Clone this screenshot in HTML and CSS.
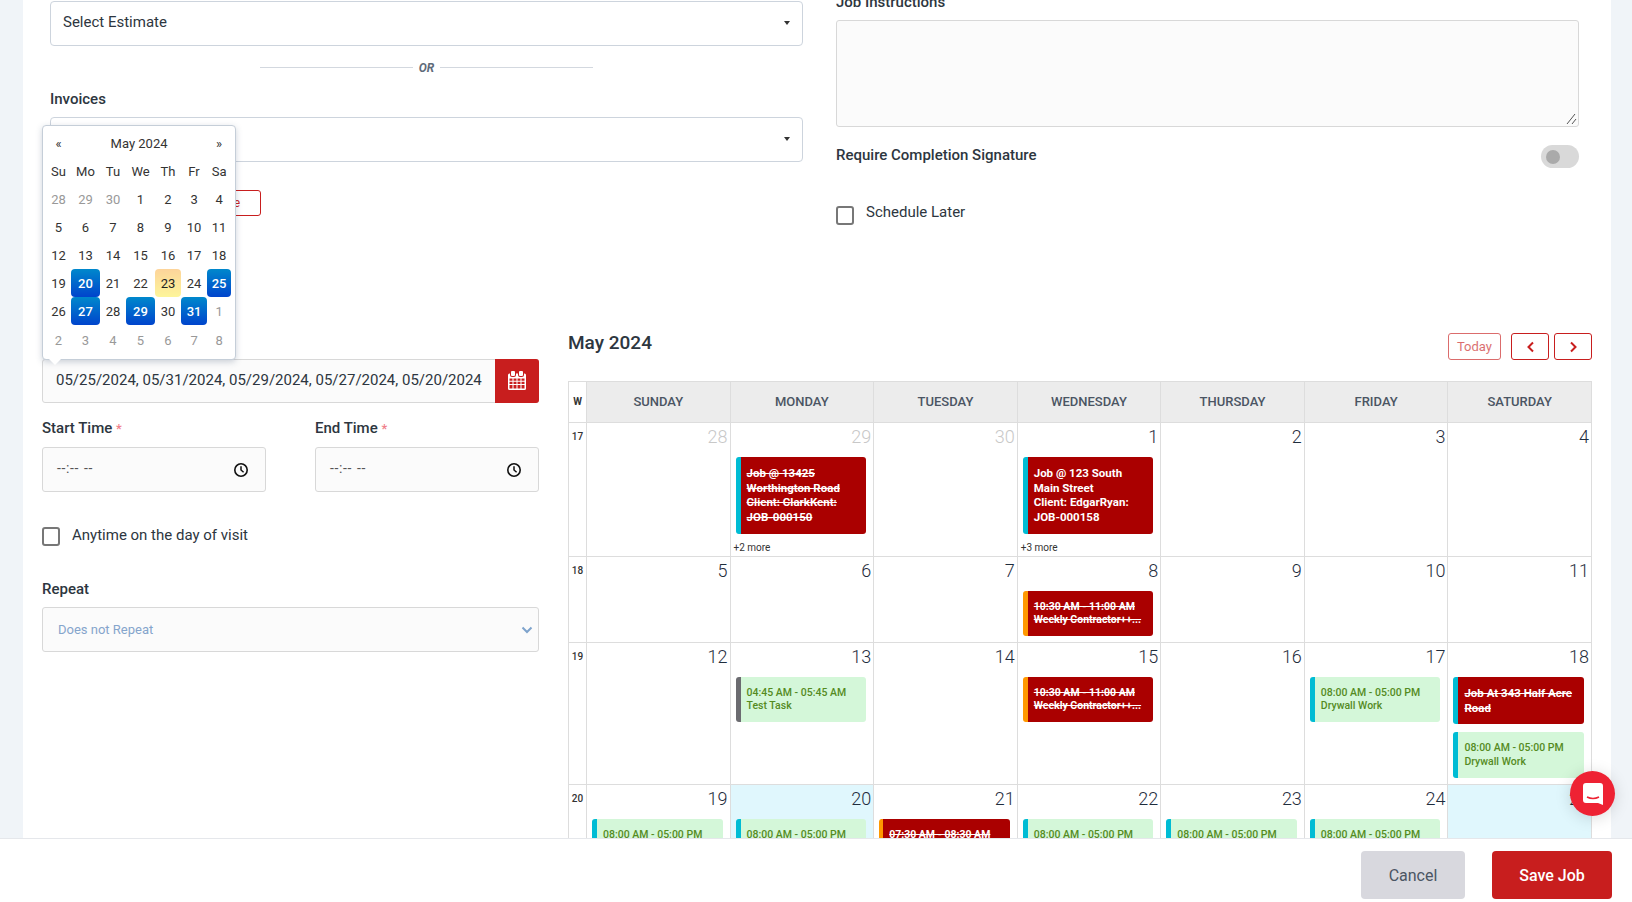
FILE: index.html
```html
<!DOCTYPE html>
<html lang="en">
<head>
    <meta charset="UTF-8">
    <meta name="viewport" content="width=device-width, initial-scale=1.0">
    <title>Schedule Job</title>
    <link rel="stylesheet" href="styles.css">
</head>
<body>

<div class="scroll-area">
    <div class="card">
        <!-- Estimate, invoice and instructions -->
        <div class="top-form">
            <div class="top-left">
                <div class="select-box">Select Estimate<span class="caret"></span></div>
                <div class="or-row"><span class="or-line"></span><em>OR</em><span class="or-line"></span></div>
                <div class="field-label">Invoices</div>
                <div class="select-box">Select Invoice<span class="caret"></span></div>
                <button class="outline-btn">Invoice</button>
            </div>
            <div class="top-right">
                <div class="field-label">Job Instructions</div>
                <div class="textarea-box">
                    <svg class="resize-grip" width="12" height="12" viewBox="0 0 12 12"><path d="M2 11 10 1M7 11l4-5" stroke="#555" stroke-width="1" fill="none"/></svg>
                </div>
                <div class="signature-row">
                    <span class="field-label">Require Completion Signature</span>
                    <span class="toggle"><span class="toggle-knob"></span></span>
                </div>
                <label class="check-row later-row"><span class="checkbox"></span>Schedule Later</label>
            </div>
        </div>

        <!-- Visit schedule and calendar -->
        <div class="schedule">
            <div class="schedule-form">
                <div class="date-field">
                    <div class="date-value">05/25/2024, 05/31/2024, 05/29/2024, 05/27/2024, 05/20/2024</div>
                    <div class="date-btn">
                        <svg width="18" height="19" viewBox="0 0 18 19"><path fill="#fff" fill-rule="evenodd" d="M4 0h2a1 1 0 0 1 1 1v3a1 1 0 0 1-1 1H4a1 1 0 0 1-1-1V1a1 1 0 0 1 1-1Zm8 0h2a1 1 0 0 1 1 1v3a1 1 0 0 1-1 1h-2a1 1 0 0 1-1-1V1a1 1 0 0 1 1-1ZM1.500 2.500H2V4a2 2 0 0 0 2 2h2a2 2 0 0 0 2-2V2.500h2V4a2 2 0 0 0 2 2h2a2 2 0 0 0 2-2V2.500h.5A1.500 1.500 0 0 1 18 4v13.500a1.500 1.500 0 0 1-1.500 1.500h-15A1.500 1.500 0 0 1 0 17.500V4a1.500 1.500 0 0 1 1.500-1.500ZM1.500 7.500v2.300h3V7.500Zm4 0v2.300h3V7.500Zm4 0v2.300h3V7.500Zm4 0v2.300h3V7.500Zm-12 3.200V13h3v-2.300Zm4 0V13h3v-2.300Zm4 0V13h3v-2.300Zm4 0V13h3v-2.300Zm-12 3.300v3.500h3V14Zm4 0v3.500h3V14Zm4 0v3.500h3V14Zm4 0v3.500h3V14Z"/></svg>
                    </div>

                    <div class="datepicker">
                        <table class="dp-table">
                            <colgroup><col class="col-su"><col class="col-mo"><col class="col-tu"><col class="col-we"><col class="col-th"><col class="col-fr"><col class="col-sa"></colgroup>
                            <tr class="dp-title"><td class="dp-nav">«</td><td colspan="5">May 2024</td><td class="dp-nav">»</td></tr>
                            <tr class="dp-head"><td>Su</td><td>Mo</td><td>Tu</td><td>We</td><td>Th</td><td>Fr</td><td>Sa</td></tr>
                            <tr><td class="old">28</td><td class="old">29</td><td class="old">30</td><td>1</td><td>2</td><td>3</td><td>4</td></tr>
                            <tr><td>5</td><td>6</td><td>7</td><td>8</td><td>9</td><td>10</td><td>11</td></tr>
                            <tr><td>12</td><td>13</td><td>14</td><td>15</td><td>16</td><td>17</td><td>18</td></tr>
                            <tr><td>19</td><td class="picked">20</td><td>21</td><td>22</td><td class="today">23</td><td>24</td><td class="picked">25</td></tr>
                            <tr><td>26</td><td class="picked">27</td><td>28</td><td class="picked">29</td><td>30</td><td class="picked">31</td><td class="old">1</td></tr>
                            <tr class="last"><td class="old">2</td><td class="old">3</td><td class="old">4</td><td class="old">5</td><td class="old">6</td><td class="old">7</td><td class="old">8</td></tr>
                        </table>
                    </div>
                </div>

                <div class="time-row">
                    <div class="time-col">
                        <div class="field-label">Start Time <span class="req">*</span></div>
                        <div class="time-input"><span class="time-text">--:-- --</span>
                            <svg width="16" height="16" viewBox="0 0 16 16"><circle cx="8" cy="8" r="6.2" fill="none" stroke="#111" stroke-width="1.600"/><path d="M8 4.200V8l2.600 2.300" fill="none" stroke="#111" stroke-width="1.500"/></svg>
                        </div>
                    </div>
                    <div class="time-col">
                        <div class="field-label">End Time <span class="req">*</span></div>
                        <div class="time-input"><span class="time-text">--:-- --</span>
                            <svg width="16" height="16" viewBox="0 0 16 16"><circle cx="8" cy="8" r="6.2" fill="none" stroke="#111" stroke-width="1.600"/><path d="M8 4.200V8l2.600 2.300" fill="none" stroke="#111" stroke-width="1.500"/></svg>
                        </div>
                    </div>
                </div>

                <label class="check-row anytime-row"><span class="checkbox"></span>Anytime on the day of visit</label>

                <div class="field-label repeat-label">Repeat</div>
                <div class="repeat-select">Does not Repeat
                    <svg width="12" height="8" viewBox="0 0 12 8"><path d="M1.500 1.500 6 6l4.500-4.500" fill="none" stroke="#7ea3cc" stroke-width="2"/></svg>
                </div>
            </div>

            <div class="calendar">
                <div class="cal-toolbar">
                    <h2>May 2024</h2>
                    <div class="cal-buttons">
                        <button class="cal-btn today-btn">Today</button>
                        <button class="cal-btn arrow-btn"><svg width="9" height="12" viewBox="0 0 9 12"><path d="M7 1.500 2.500 6 7 10.500" fill="none" stroke="#c81e1e" stroke-width="2"/></svg></button>
                        <button class="cal-btn arrow-btn"><svg width="9" height="12" viewBox="0 0 9 12"><path d="M2 1.500 6.500 6 2 10.500" fill="none" stroke="#c81e1e" stroke-width="2"/></svg></button>
                    </div>
                </div>

                <div class="cal-grid">
                    <div class="cal-head week-cell">W</div>
                    <div class="cal-head">SUNDAY</div>
                    <div class="cal-head">MONDAY</div>
                    <div class="cal-head">TUESDAY</div>
                    <div class="cal-head">WEDNESDAY</div>
                    <div class="cal-head">THURSDAY</div>
                    <div class="cal-head">FRIDAY</div>
                    <div class="cal-head">SATURDAY</div>

                    <div class="week-num">17</div>
                    <div class="day other"><div class="day-num">28</div></div>
                    <div class="day other"><div class="day-num">29</div>
                        <div class="event job cyan done">Job @ 13425<br>Worthington Road<br>Client: ClarkKent:<br>JOB-000150</div>
                        <div class="more">+2 more</div>
                    </div>
                    <div class="day other"><div class="day-num">30</div></div>
                    <div class="day"><div class="day-num">1</div>
                        <div class="event job cyan">Job @ 123 South<br>Main Street<br>Client: EdgarRyan:<br>JOB-000158</div>
                        <div class="more">+3 more</div>
                    </div>
                    <div class="day"><div class="day-num">2</div></div>
                    <div class="day"><div class="day-num">3</div></div>
                    <div class="day"><div class="day-num">4</div></div>

                    <div class="week-num">18</div>
                    <div class="day"><div class="day-num">5</div></div>
                    <div class="day"><div class="day-num">6</div></div>
                    <div class="day"><div class="day-num">7</div></div>
                    <div class="day"><div class="day-num">8</div>
                        <div class="event job orange done short">10:30 AM - 11:00 AM<br>Weekly Contractor++...</div>
                    </div>
                    <div class="day"><div class="day-num">9</div></div>
                    <div class="day"><div class="day-num">10</div></div>
                    <div class="day"><div class="day-num">11</div></div>

                    <div class="week-num">19</div>
                    <div class="day"><div class="day-num">12</div></div>
                    <div class="day"><div class="day-num">13</div>
                        <div class="event task grey short">04:45 AM - 05:45 AM<br>Test Task</div>
                    </div>
                    <div class="day"><div class="day-num">14</div></div>
                    <div class="day"><div class="day-num">15</div>
                        <div class="event job orange done short">10:30 AM - 11:00 AM<br>Weekly Contractor++...</div>
                    </div>
                    <div class="day"><div class="day-num">16</div></div>
                    <div class="day"><div class="day-num">17</div>
                        <div class="event task cyan short">08:00 AM - 05:00 PM<br>Drywall Work</div>
                    </div>
                    <div class="day"><div class="day-num">18</div>
                        <div class="event job cyan done">Job At 343 Half Acre Road</div>
                        <div class="event task cyan short tall">08:00 AM - 05:00 PM<br>Drywall Work</div>
                    </div>

                    <div class="week-num">20</div>
                    <div class="day"><div class="day-num">19</div>
                        <div class="event task cyan short">08:00 AM - 05:00 PM<br>Drywall Work</div>
                    </div>
                    <div class="day selected"><div class="day-num">20</div>
                        <div class="event task cyan short">08:00 AM - 05:00 PM<br>Drywall Work</div>
                    </div>
                    <div class="day"><div class="day-num">21</div>
                        <div class="event job orange thin done short">07:30 AM - 08:30 AM<br>Weekly Contractor++...</div>
                    </div>
                    <div class="day"><div class="day-num">22</div>
                        <div class="event task cyan short">08:00 AM - 05:00 PM<br>Drywall Work</div>
                    </div>
                    <div class="day"><div class="day-num">23</div>
                        <div class="event task cyan short">08:00 AM - 05:00 PM<br>Drywall Work</div>
                    </div>
                    <div class="day"><div class="day-num">24</div>
                        <div class="event task cyan short">08:00 AM - 05:00 PM<br>Drywall Work</div>
                    </div>
                    <div class="day selected"><div class="day-num">25</div></div>
                </div>
            </div>
        </div>
    </div>
</div>

<footer class="action-bar">
    <button class="btn-cancel">Cancel</button>
    <button class="btn-save">Save Job</button>
</footer>

<!-- Chat launcher -->
<div class="chat-fab">
    <svg width="22" height="24" viewBox="0 0 22 24"><path fill="#fff" d="M4 1h14a3 3 0 0 1 3 3v19l-5-2H4a3 3 0 0 1-3-3V4a3 3 0 0 1 3-3Z"/><path d="M5 15c3.800 2 8.200 2 12 0" fill="none" stroke="#ee2233" stroke-width="1.500"/></svg>
</div>

</body>
</html>
```

FILE: styles.css
```css
* {
    box-sizing: border-box;
}
body {
    font-family: Roboto, sans-serif;
    margin: 0;
    height: 902px;
    overflow: hidden;
    display: flex;
    flex-direction: column;
    background-color: #f0f4f8;
    color: #2d3640;
    font-size: 15px;
}
button {
    font-family: inherit;
    cursor: pointer;
}
.scroll-area {
    height: 839px;
    overflow: hidden;
    padding: 0 21px 0 23px;
}
.card {
    background-color: #fff;
    height: 100%;
}
.field-label {
    font-weight: 500;
    font-size: 15px;
    line-height: 18px;
    color: #2d3640;
}

/* Top form */
.top-form {
    height: 303px;
    display: grid;
    grid-template-columns: 753px 743px;
    column-gap: 33px;
    padding-left: 27px;
}
.top-left {
    padding-top: 1px;
}
.select-box {
    position: relative;
    height: 45px;
    line-height: 40px;
    padding-left: 12px;
    background-color: #fff;
    border: 1px solid #cdd4dd;
    border-radius: 4px;
}
.caret {
    position: absolute;
    right: 12px;
    top: 19px;
    border-top: 4px solid #333;
    border-left: 3px solid transparent;
    border-right: 3px solid transparent;
}
.or-row {
    display: flex;
    align-items: center;
    justify-content: center;
    gap: 6px;
    height: 43px;
    font-size: 12px;
    font-weight: 700;
    color: #5f6b7a;
}
.or-line {
    width: 153px;
    height: 1px;
    background-color: #d3d8df;
}
.top-left .field-label {
    margin-top: 1px;
    height: 27px;
}
.outline-btn {
    display: block;
    width: 211px;
    height: 26px;
    margin-top: 28px;
    padding: 0 20px 0 0;
    text-align: right;
    font-size: 12px;
    color: #c81e1e;
    background-color: #fff;
    border: 1px solid #c81e1e;
    border-radius: 3px;
}
.top-right {
    margin-top: -7px;
}
.textarea-box {
    position: relative;
    height: 107px;
    margin-top: 9px;
    background-color: #fbfbfb;
    border: 1px solid #d8d8d8;
    border-radius: 3px;
}
.resize-grip {
    position: absolute;
    right: 1px;
    bottom: 1px;
}
.signature-row {
    display: flex;
    justify-content: space-between;
    align-items: flex-start;
    margin-top: 18px;
}
.signature-row .field-label {
    margin-top: 1px;
}
.toggle {
    display: flex;
    align-items: center;
    width: 38px;
    height: 23px;
    padding-left: 5px;
    background-color: #d9d9d9;
    border-radius: 12px;
}
.toggle-knob {
    width: 14px;
    height: 14px;
    border-radius: 50%;
    background-color: #aaa;
}
.check-row {
    display: flex;
    align-items: flex-start;
    gap: 12px;
    line-height: 16px;
}
.checkbox {
    width: 18px;
    height: 19px;
    background-color: #fff;
    border: 2px solid #777;
    border-radius: 3px;
}
.later-row {
    margin-top: 38px;
    line-height: 12px;
}

/* Schedule section */
.schedule {
    display: grid;
    grid-template-columns: 497px 1024px;
    column-gap: 29px;
    padding-left: 19px;
}
.schedule-form {
    padding-top: 56px;
}
.date-field {
    position: relative;
    display: flex;
    height: 44px;
    background-color: #fbfbfb;
    border: 1px solid #d8d8d8;
    border-radius: 3px;
}
.date-value {
    flex: 1;
    padding-left: 13px;
    line-height: 41px;
    white-space: nowrap;
}
.date-btn {
    width: 44px;
    margin: -1px;
    padding-bottom: 2px;
    display: flex;
    align-items: center;
    justify-content: center;
    background-color: #c81e1e;
    border-radius: 0 3px 3px 0;
}

/* Date picker popup */
.datepicker {
    position: absolute;
    left: -1px;
    bottom: 100%;
    width: 194px;
    padding: 3px 4px 4px 3px;
    background-color: #fff;
    border: 1px solid #c5ced8;
    border-radius: 4px;
    box-shadow: 0 2px 6px rgba(60, 80, 110, 0.25);
}
.datepicker::after {
    content: "";
    position: absolute;
    left: 6px;
    bottom: -6px;
    border-top: 6px solid #fff;
    border-left: 6px solid transparent;
    border-right: 6px solid transparent;
}
.dp-table {
    width: 185px;
    table-layout: fixed;
    border-collapse: collapse;
    font-size: 13px;
    color: #333;
    text-align: center;
}
.dp-table td {
    height: 28px;
    padding: 0;
}
.col-su { width: 25px; }
.col-mo { width: 29px; }
.col-tu { width: 26px; }
.col-we { width: 29px; }
.col-th { width: 26px; }
.col-fr { width: 26px; }
.col-sa { width: 24px; }
.dp-table .last td {
    height: 30px;
}
.dp-table .old {
    color: #999;
}
.dp-table .picked {
    color: #fff;
    font-weight: 500;
    background-image: linear-gradient(to bottom, #0088cc, #0044cc);
    border-radius: 4px;
}
.dp-table .today {
    color: #222;
    background-image: linear-gradient(to bottom, #fdd49a, #fdf59a);
    border-radius: 4px;
}

/* Start and end time */
.time-row {
    display: grid;
    grid-template-columns: 224px 224px;
    column-gap: 49px;
    margin-top: 16px;
}
.req {
    color: #f0808a;
    font-size: 13px;
}
.time-input {
    display: flex;
    justify-content: space-between;
    align-items: center;
    height: 45px;
    margin-top: 9px;
    padding: 0 16px 0 14px;
    color: #555;
    background-color: #fbfbfb;
    border: 1px solid #d8d8d8;
    border-radius: 3px;
}
.time-text {
    padding-bottom: 4px;
    font-size: 14px;
    letter-spacing: 0.6px;
    word-spacing: 1px;
}
.anytime-row {
    margin-top: 35px;
}
.repeat-label {
    margin-top: 34px;
}
.repeat-select {
    display: flex;
    justify-content: space-between;
    align-items: center;
    height: 45px;
    margin-top: 9px;
    padding: 0 5px 0 15px;
    font-size: 13px;
    color: #85a5cc;
    background-color: #fbfbfb;
    border: 1px solid #d8d8d8;
    border-radius: 3px;
}

/* Calendar */
.cal-toolbar {
    display: flex;
    justify-content: space-between;
    height: 78px;
    padding-top: 30px;
}
.cal-toolbar h2 {
    margin: 0;
    padding-top: 1px;
    font-size: 19px;
    font-weight: 500;
    line-height: 18px;
    color: #2d3640;
}
.cal-buttons {
    display: flex;
    gap: 5px;
}
.cal-btn {
    height: 27px;
    padding: 0;
    display: flex;
    align-items: center;
    justify-content: center;
    background-color: #fff;
    border: 1px solid #c81e1e;
    border-radius: 3px;
}
.today-btn {
    width: 53px;
    margin-right: 5px;
    font-size: 13px;
    color: #c81e1e;
    opacity: 0.65;
}
.arrow-btn {
    width: 38px;
}
.cal-grid {
    display: grid;
    grid-template-columns: 18px repeat(7, 1fr);
    grid-template-rows: 41px 134px 86px 142px 60px;
    border-top: 1px solid #ddd;
    border-left: 1px solid #ddd;
}
.cal-head {
    display: flex;
    align-items: center;
    justify-content: center;
    padding-bottom: 2px;
    font-size: 13px;
    font-weight: 500;
    color: #4b5563;
    background-color: #ececec;
    border-right: 1px solid #ddd;
    border-bottom: 1px solid #ddd;
}
.week-cell {
    font-size: 10px;
    font-weight: 700;
    color: #333;
    background-color: #fff;
}
.week-num {
    padding-top: 8px;
    text-align: center;
    font-size: 10px;
    font-weight: 500;
    line-height: 12px;
    color: #333;
    border-right: 1px solid #ddd;
    border-bottom: 1px solid #ddd;
}
.day {
    padding: 3px 2px 0 5px;
    border-right: 1px solid #ddd;
    border-bottom: 1px solid #ddd;
    min-width: 0;
}
.day.selected {
    background-color: #e0f7fd;
}
.day-num {
    height: 30px;
    margin-bottom: 1px;
    text-align: right;
    font-size: 18px;
    font-weight: 300;
    line-height: 22px;
    color: #1f2d3d;
}
.day.other .day-num {
    color: #c8c8c8;
}
.event {
    margin: 0 5px 8px 0;
    padding: 9px 4px 9px 6px;
    font-size: 11.5px;
    line-height: 14.7px;
    border-left: 5px solid #00bcd4;
    border-radius: 3px;
}
.event.short {
    min-height: 45px;
    font-size: 10.5px;
    line-height: 13px;
    white-space: nowrap;
    overflow: hidden;
}
.event.tall {
    min-height: 46px;
    line-height: 14px;
}
.event.job {
    font-weight: 700;
    color: #fff;
    background-color: #aa0000;
}
.event.done {
    text-decoration: line-through;
}
.event.task {
    font-weight: 500;
    color: #558b1f;
    background-color: #d4f7d9;
}
.event.orange {
    border-left-color: #ff9800;
}
.event.thin {
    border-left-width: 4px;
}
.event.grey {
    border-left-color: #6b6b70;
}
.more {
    margin-left: -2px;
    font-size: 10px;
    line-height: 12px;
    color: #333;
}

/* Footer */
.action-bar {
    flex: 1;
    display: flex;
    justify-content: flex-end;
    gap: 27px;
    padding: 12px 20px 3px 0;
    background-color: #fff;
    border-top: 1px solid #e5e7eb;
}
.action-bar button {
    height: 48px;
    border: none;
    border-radius: 4px;
    font-size: 16px;
}
.btn-cancel {
    width: 104px;
    color: #4b5563;
    background-color: #d8d8de;
}
.btn-save {
    width: 120px;
    font-weight: 500;
    color: #fff;
    background-color: #c81e1e;
}
.chat-fab {
    position: fixed;
    right: 17px;
    bottom: 86px;
    width: 45px;
    height: 45px;
    display: flex;
    align-items: center;
    justify-content: center;
    border-radius: 50%;
    background-color: #ee2233;
    box-shadow: 0 2px 16px rgba(0, 0, 0, 0.15);
}
```
